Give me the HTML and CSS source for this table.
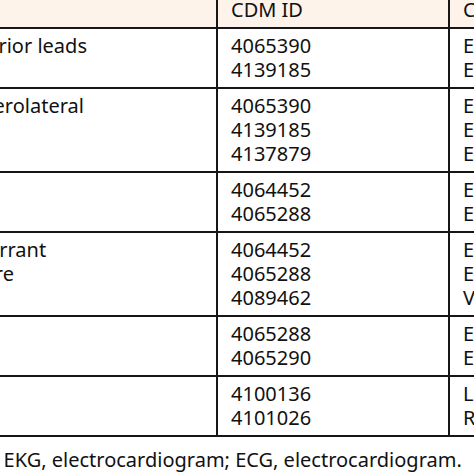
FILE: index.html
```html
<!DOCTYPE html>
<html lang="en">
<head>
<meta charset="utf-8">
<title>CDM concepts</title>
<link rel="stylesheet" href="styles.css">
</head>
<body>
<div class="sheet">
  <table class="codes">
    <colgroup>
      <col class="c-finding">
      <col class="c-id">
      <col class="c-name">
    </colgroup>
    <thead>
      <tr>
        <th>Finding</th>
        <th>CDM ID</th>
        <th>Concept name</th>
      </tr>
    </thead>
    <tbody>
      <tr>
        <td>ST elevation in inferior leads</td>
        <td>4065390<br>4139185</td>
        <td>EKG: ST elevation<br>ECG: ST elevation</td>
      </tr>
      <tr>
        <td>ST elevation in anterolateral<br>leads</td>
        <td>4065390<br>4139185<br>4137879</td>
        <td>EKG: ST elevation<br>ECG: ST elevation<br>EKG: ST segment changes</td>
      </tr>
      <tr>
        <td>Atrial flutter</td>
        <td>4064452<br>4065288</td>
        <td>EKG: atrial flutter<br>ECG: atrial flutter</td>
      </tr>
      <tr>
        <td>Wide QRS with aberrant<br>ventricular structure</td>
        <td>4064452<br>4065288<br>4089462</td>
        <td>EKG: atrial flutter<br>ECG: atrial flutter<br>Ventricular tachycardia</td>
      </tr>
      <tr>
        <td>Tachycardia</td>
        <td>4065288<br>4065290</td>
        <td>EKG: tachycardia<br>ECG: tachycardia</td>
      </tr>
      <tr>
        <td>Bundle block</td>
        <td>4100136<br>4101026</td>
        <td>Left bundle branch block<br>Right bundle branch block</td>
      </tr>
    </tbody>
  </table>
  <p class="note">CDM, concept ID; EKG, electrocardiogram; ECG, electrocardiogram.</p>
</div>
</body>
</html>
```
FILE: styles.css
```css
html, body {
  margin: 0;
  padding: 0;
  background: #ffffff;
  overflow: hidden;
}

.sheet {
  margin-top: -9px;
  margin-left: -193px;
  width: 1100px;
  font-family: "Noto Sans", "Open Sans", sans-serif;
  font-size: 20px;
  line-height: 24px;
  color: #111111;
}

.codes {
  border-collapse: collapse;
  table-layout: fixed;
  width: 1041px;
}

.c-finding { width: 409px; }
.c-id { width: 232px; }
.c-name { width: 400px; }

.codes th,
.codes td {
  border: 2px solid #161616;
  padding: 5px 12px 5px 13px;
  text-align: left;
  vertical-align: top;
  white-space: nowrap;
  overflow: hidden;
}

.codes th {
  font-weight: normal;
  background: #fdf3ea;
}

.note {
  margin: 11px 0 0 0;
  padding-left: 29px;
  white-space: nowrap;
}
```
